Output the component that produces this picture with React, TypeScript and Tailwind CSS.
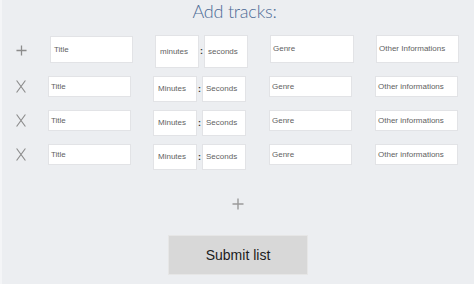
import React from "react";

const box = "flex items-center bg-white border border-[#e2e3e6] text-[8px] text-[#5f5f5f]";

function PlusIcon({ size = 11, color = "#8c8c8c" }: { size?: number; color?: string }) {
  return (
    <svg width={size} height={size} viewBox="0 0 12 12">
      <path d="M6 0.5v11M0.5 6h11" stroke={color} strokeWidth="1.4" />
    </svg>
  );
}

function CrossIcon() {
  return (
    <svg width="10" height="13" viewBox="0 0 10 13">
      <path d="M0.6 0.5l8.8 12M9.4 0.5l-8.8 12" stroke="#8c8c8c" strokeWidth="1.15" />
    </svg>
  );
}

function Colon() {
  return <span className="w-[5px] text-center text-[9px] font-bold text-[#333] leading-none">:</span>;
}

function TrackRow() {
  return (
    <div className="flex items-start">
      <div className="w-[42px] h-[21px] flex items-center justify-center">
        <CrossIcon />
      </div>
      <div className={`${box} pl-[2px] ml-[6px] w-[83px] h-[21px]`}>Title</div>
      <div className={`${box} pl-[4px] ml-[22px] w-[44px] h-[26px]`}>Minutes</div>
      <div className="h-[26px] flex items-center">
        <Colon />
      </div>
      <div className={`${box} pl-[3px] w-[44px] h-[26px]`}>Seconds</div>
      <div className={`${box} pl-[2px] ml-[23px] w-[83px] h-[21px]`}>Genre</div>
      <div className={`${box} pl-[2px] ml-[23px] w-[83px] h-[21px]`}>Other informations</div>
    </div>
  );
}

export default function App() {
  return (
    <div
      className="w-[474px] h-[284px] bg-[#eceef1] border-l-[2px] border-[#f4f5f7] overflow-hidden"
      style={{ fontFamily: '"Liberation Sans", Arial, sans-serif' }}
    >
      <h1
        className="text-center text-[18px] leading-[20px] font-light tracking-[-0.2px] text-[#4d6b96] pt-[1px] pr-[7px]"
        style={{ fontFamily: "Lato, sans-serif" }}
      >
        Add tracks:
      </h1>
      <div className="mt-[14px] flex flex-col gap-[8px] ml-[-2px]">
        <div className="flex items-start">
          <div className="w-[43px] h-[30px] flex items-center justify-center">
            <PlusIcon />
          </div>
          <div className={`${box} pl-[3px] ml-[7px] mt-[1px] w-[83px] h-[27px]`}>Title</div>
          <div className={`${box} pl-[4px] ml-[22px] w-[44px] h-[33px]`}>minutes</div>
          <div className="h-[33px] flex items-center">
            <Colon />
          </div>
          <div className={`${box} pl-[3px] w-[44px] h-[33px]`}>seconds</div>
          <div className={`${box} pl-[2px] ml-[22px] w-[84px] h-[28px]`}>Genre</div>
          <div className={`${box} pl-[2px] ml-[22px] w-[83px] h-[28px]`}>Other Informations</div>
        </div>
        <TrackRow />
        <TrackRow />
        <TrackRow />
      </div>
      <div className="mt-[28px] flex justify-center pr-[1px]">
        <PlusIcon size={12} color="#9a9a9a" />
      </div>
      <div className="mt-[25px] flex justify-center">
        <button className="w-[140px] h-[40px] bg-[#d8d8d8] border border-[#e6e6e6] text-[14px] text-[#1c1c1c]">
          Submit list
        </button>
      </div>
    </div>
  );
}
